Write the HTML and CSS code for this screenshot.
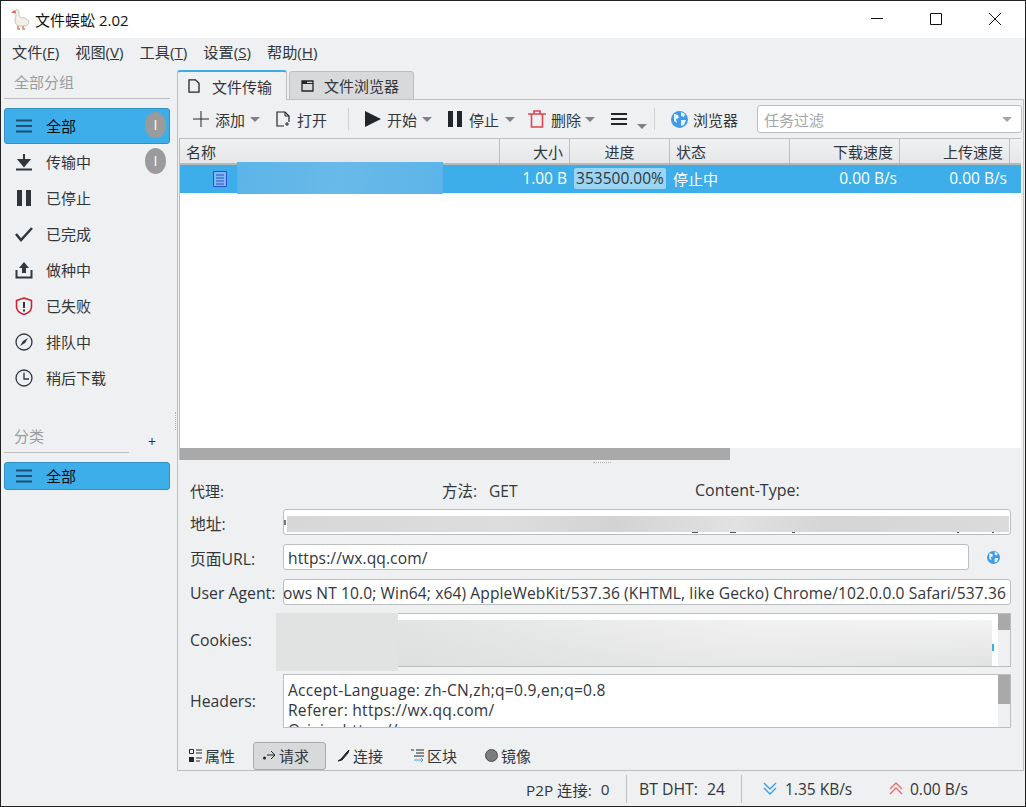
FILE: index.html
```html
<!DOCTYPE html>
<html lang="zh-CN">
<head>
    <meta charset="UTF-8">
    <title>文件蜈蚣 2.02</title>
    <link rel="stylesheet" href="styles.css">
</head>
<body>
<div class="window">

    <div class="titlebar">
        <svg class="app-icon" width="20" height="22" viewBox="0 0 20 22">
            <path d="M5 2c2-1 3 0 3 2 0 3 0 4 2 6 2-1 5 0 7 2 2 3 0 6-3 6H9c-3 0-5-2-5-6 0-2 1-3 1-5 0-2-1-2-1-3z" fill="#f1efe9" stroke="#c9c5ba"/>
            <path d="M4 2 0 4.500l5 1z" fill="#d9604c"/>
            <path d="M7 18v3h2M12 18v3h2" stroke="#d9806c" stroke-width="1.500" fill="none"/>
        </svg>
        <span class="app-title">文件蜈蚣 2.02</span>
        <div class="win-buttons">
            <svg width="14" height="14" viewBox="0 0 14 14"><path d="M1 6.500h12" stroke="#111" fill="none"/></svg>
            <svg width="14" height="14" viewBox="0 0 14 14"><path d="M1.500 1.500h11v11h-11z" stroke="#111" fill="none"/></svg>
            <svg width="14" height="14" viewBox="0 0 14 14"><path d="M1 1l12 12M13 1 1 13" stroke="#111" fill="none"/></svg>
        </div>
    </div>

    <div class="menubar">
        <span>文件(<u>F</u>)</span>
        <span>视图(<u>V</u>)</span>
        <span>工具(<u>T</u>)</span>
        <span>设置(<u>S</u>)</span>
        <span>帮助(<u>H</u>)</span>
    </div>

    <div class="content">
        <aside class="sidebar">
            <div class="side-head">全部分组</div>
            <div class="side-item selected">
                <svg class="side-icon" viewBox="0 0 18 18"><path d="M1 3.500h16M1 9h16M1 14.500h16" stroke="#1d4f73" stroke-width="2"/></svg>
                <span>全部</span><i class="badge">I</i>
            </div>
            <div class="side-item">
                <svg class="side-icon" viewBox="0 0 18 18"><path d="M9 1v7M4 7h10l-5 6z" stroke="#31363b" stroke-width="2" fill="#31363b"/><path d="M1 16.500h16" stroke="#31363b" stroke-width="2"/></svg>
                <span>传输中</span><i class="badge">I</i>
            </div>
            <div class="side-item">
                <svg class="side-icon" viewBox="0 0 18 18"><path d="M2 1h5v16H2zM11 1h5v16h-5z" fill="#31363b"/></svg>
                <span>已停止</span>
            </div>
            <div class="side-item">
                <svg class="side-icon" viewBox="0 0 18 18"><path d="M1 9l5 6L17 3" stroke="#31363b" stroke-width="2.500" fill="none"/></svg>
                <span>已完成</span>
            </div>
            <div class="side-item">
                <svg class="side-icon" viewBox="0 0 18 18"><path d="M1.500 9v7.500h15V9" stroke="#31363b" stroke-width="2" fill="none"/><path d="M9 1l5 6h-3v5H7V7H4z" fill="#31363b"/></svg>
                <span>做种中</span>
            </div>
            <div class="side-item">
                <svg class="side-icon" viewBox="0 0 18 18"><path d="M9 1l7.500 2.500V10c0 3-3 6-7.500 7.500C4.500 16 1.500 13 1.500 10V3.500z" stroke="#c8202c" stroke-width="1.500" fill="none"/><path d="M9 5v6M9 12.500v2" stroke="#31363b" stroke-width="2"/></svg>
                <span>已失败</span>
            </div>
            <div class="side-item">
                <svg class="side-icon" viewBox="0 0 18 18"><circle cx="9" cy="9" r="8" stroke="#31363b" fill="none" stroke-width="1.300"/><path d="M13 5 10 10 5 13 8 8z" fill="#31363b"/></svg>
                <span>排队中</span>
            </div>
            <div class="side-item">
                <svg class="side-icon" viewBox="0 0 18 18"><circle cx="9" cy="9" r="8" stroke="#31363b" fill="none" stroke-width="1.300"/><path d="M9 3.500V10h5" stroke="#31363b" fill="none" stroke-width="1.300"/></svg>
                <span>稍后下载</span>
            </div>
            <div class="side-cat">
                <div class="side-cat-head">分类</div>
                <span class="side-plus">+</span>
            </div>
            <div class="side-item selected short">
                <svg class="side-icon" viewBox="0 0 18 18"><path d="M1 3.500h16M1 9h16M1 14.500h16" stroke="#1d4f73" stroke-width="2"/></svg>
                <span>全部</span>
            </div>
            <i class="grip-v"></i>
        </aside>

        <main class="main">
            <div class="tabs">
                <div class="tab active">
                    <svg width="12" height="14" viewBox="0 0 12 14"><path d="M1 .8h6.500l3.500 3.500v8.900H1z" stroke="#232629" fill="none" stroke-width="1.300"/></svg>
                    <span>文件传输</span>
                </div>
                <div class="tab">
                    <svg width="13" height="12" viewBox="0 0 13 12"><path d="M1 1h11v10H1z" stroke="#232629" fill="none" stroke-width="1.300"/><path d="M1 1h5v2h6v1H1z" fill="#232629"/></svg>
                    <span>文件浏览器</span>
                </div>
            </div>

            <div class="panel">
                <div class="toolbar">
                    <div class="tool tool-add">
                        <svg width="16" height="16" viewBox="0 0 16 16"><path d="M8 0v16M0 8h16" stroke="#232629"/></svg>
                        <span>添加</span><b class="caret"></b>
                    </div>
                    <div class="tool tool-open">
                        <svg width="15" height="16" viewBox="0 0 15 16"><path d="M8 15H1V1h8l4 4v6" stroke="#232629" fill="none" stroke-width="1.200"/><path d="M9 1v4h4M11 11v4M9 13h4" stroke="#232629" fill="none"/></svg>
                        <span>打开</span>
                    </div>
                    <i class="tool-sep sep-a"></i>
                    <div class="tool tool-start">
                        <svg width="16" height="16" viewBox="0 0 16 16"><path d="M0 0l16 8-16 8z" fill="#232629"/></svg>
                        <span>开始</span><b class="caret"></b>
                    </div>
                    <div class="tool tool-stop">
                        <svg width="14" height="16" viewBox="0 0 14 16"><path d="M0 0h5v16H0zM9 0h5v16H9z" fill="#232629"/></svg>
                        <span>停止</span><b class="caret"></b>
                    </div>
                    <div class="tool tool-del">
                        <svg width="18" height="18" viewBox="0 0 18 18"><path d="M0 4h18M6 4V1h6v3M3.500 4v13h11V4" stroke="#da4453" stroke-width="1.600" fill="none"/></svg>
                        <span>删除</span><b class="caret"></b>
                    </div>
                    <div class="tool tool-menu">
                        <svg width="16" height="14" viewBox="0 0 16 14"><path d="M0 2h16M0 7h16M0 12h16" stroke="#232629" stroke-width="2"/></svg>
                        <b class="caret caret-low"></b>
                    </div>
                    <i class="tool-sep sep-b"></i>
                    <div class="tool tool-browser">
                        <svg width="17" height="17" viewBox="0 0 17 17"><circle cx="8.500" cy="8.500" r="8.500" fill="#3d9be9"/><path d="M3 3l4 1 1 3-3 1 1 4-3-2zM10 1l4 2-1 3-3-1zM10 9l5 0-2 5-3 1z" fill="#e9f3fb"/></svg>
                        <span>浏览器</span>
                    </div>
                    <div class="filter">
                        <span>任务过滤</span><b class="caret"></b>
                    </div>
                </div>

                <div class="table">
                    <div class="thead">
                        <div class="col col-name">名称</div>
                        <div class="col col-size right">大小</div>
                        <div class="col col-prog center">进度</div>
                        <div class="col col-state">状态</div>
                        <div class="col col-down right">下载速度</div>
                        <div class="col col-up right">上传速度</div>
                    </div>
                    <div class="trow">
                        <div class="col col-name">
                            <svg class="file-icon" width="14" height="16" viewBox="0 0 14 16"><path d="M.5.500h13v15H.500z" fill="#7fb7f0" stroke="#2b50c8"/><path d="M3 4h8M3 7h8M3 10h8M3 13h8" stroke="#2b50c8"/></svg>
                        </div>
                        <div class="col col-size right">1.00 B</div>
                        <div class="col col-prog center"><span class="prog">353500.00%</span></div>
                        <div class="col col-state">停止中</div>
                        <div class="col col-down right">0.00 B/s</div>
                        <div class="col col-up right">0.00 B/s</div>
                        <div class="blur-name"></div>
                    </div>
                    <div class="tbody"></div>
                    <div class="hscroll"><div class="hthumb"></div></div>
                </div>

                <div class="splitter"></div>

                <div class="details">
                    <i class="grip-h"></i>
                    <div class="meta">
                        <span class="meta-proxy">代理:</span>
                        <span class="meta-method">方法:<span class="method-value">GET</span></span>
                        <span class="meta-type">Content-Type:</span>
                    </div>
                    <div class="field first">
                        <label>地址:</label>
                        <div class="input addr"><div class="blur-addr"></div></div>
                    </div>
                    <div class="field">
                        <label>页面URL:</label>
                        <div class="input narrow">https://wx.qq.com/</div>
                        <svg class="url-globe" width="13" height="13" viewBox="0 0 17 17"><circle cx="8.500" cy="8.500" r="8.500" fill="#3d9be9"/><path d="M3 3l4 1 1 3-3 1 1 4-3-2zM10 1l4 2-1 3-3-1zM10 9l5 0-2 5-3 1z" fill="#e9f3fb"/></svg>
                    </div>
                    <div class="field">
                        <label>User Agent:</label>
                        <div class="input clip">ows NT 10.0; Win64; x64) AppleWebKit/537.36 (KHTML, like Gecko) Chrome/102.0.0.0 Safari/537.36</div>
                    </div>
                    <div class="field tall cookies">
                        <label>Cookies:</label>
                        <div class="area cookie-area">
                            <div class="vscroll"><div class="vthumb short-thumb"></div></div>
                            <div class="blur-cookie"></div>
                        </div>
                        <div class="blur-left"></div>
                    </div>
                    <div class="field tall headers">
                        <label>Headers:</label>
                        <div class="area">
                            <div class="area-text">Accept-Language: zh-CN,zh;q=0.9,en;q=0.8<br>Referer: https://wx.qq.com/<br>Origin: https://wx.qq.com</div>
                            <div class="vscroll"><div class="vthumb"></div></div>
                        </div>
                    </div>
                </div>

                <div class="bottom-tabs">
                    <div class="btab btab-attr">
                        <svg width="13" height="13" viewBox="0 0 13 13"><path d="M.5.500h4v4h-4z" fill="none" stroke="#232629"/><path d="M0 8h5v5H0z" fill="#232629"/><path d="M7 1h6M7 4h6M7 9h6M7 12h4" stroke="#232629"/></svg>
                        <span>属性</span>
                    </div>
                    <div class="btab btab-req current">
                        <svg width="13" height="11" viewBox="0 0 13 11"><path d="M4 5h8M8 1l4 4-4 4" stroke="#232629" fill="none"/><circle cx="1.500" cy="8" r="1.500" fill="#232629"/></svg>
                        <span>请求</span>
                    </div>
                    <div class="btab btab-conn">
                        <svg width="13" height="13" viewBox="0 0 13 13"><path d="M1 12l3-2 6-7 2-2-1 3-6 7z" fill="#232629" stroke="#232629"/></svg>
                        <span>连接</span>
                    </div>
                    <div class="btab btab-block">
                        <svg width="13" height="13" viewBox="0 0 13 13"><path d="M0 1h3M5 1h8M5 4h8M3 7h10" stroke="#232629"/><path d="M3 11h9M10 9l2 2-2 2" stroke="#3daee9" fill="none"/></svg>
                        <span>区块</span>
                    </div>
                    <div class="btab btab-mirror">
                        <svg width="13" height="13" viewBox="0 0 13 13"><circle cx="6.500" cy="6.500" r="6" fill="#7a7c7e" stroke="#4d4f51"/></svg>
                        <span>镜像</span>
                    </div>
                </div>
            </div>
        </main>
    </div>

    <div class="statusbar">
        <div class="stat stat-p2p"><span>P2P 连接:</span><span>0</span></div>
        <div class="stat stat-dht"><span>BT DHT:</span><span>24</span></div>
        <div class="stat stat-down">
            <svg width="14" height="14" viewBox="0 0 14 14"><path d="M1 1l6 6 6-6M1 6l6 6 6-6" stroke="#3d9be9" stroke-width="1.400" fill="none"/></svg>
            <span>1.35 KB/s</span>
        </div>
        <div class="stat stat-up">
            <svg width="14" height="14" viewBox="0 0 14 14"><path d="M1 7l6-6 6 6M1 12l6-6 6 6" stroke="#e56b70" stroke-width="1.400" fill="none"/></svg>
            <span>0.00 B/s</span>
        </div>
    </div>

</div>
</body>
</html>
```

FILE: styles.css
```css
html, body {
    margin: 0;
    height: 100%;
    background-color: #eff0f1;
}

body {
    font-family: "Open Sans", "Noto Sans CJK SC", sans-serif;
    font-size: 15px;
    color: #31363b;
    overflow: hidden;
}

.window {
    width: 1026px;
    height: 807px;
    box-sizing: border-box;
    border: 1px solid #222;
    display: flex;
    flex-direction: column;
    background-color: #eff0f1;
}

/* title bar */
.titlebar {
    height: 37px;
    flex: none;
    box-sizing: border-box;
    background-color: #fff;
    display: flex;
    align-items: center;
    padding: 0 0 1px 10px;
    color: #111;
}

.app-icon {
    margin-right: 4px;
}

.win-buttons {
    margin-left: auto;
    display: flex;
    gap: 45px;
    padding-right: 23px;
}

/* menu */
.menubar {
    height: 28px;
    flex: none;
    box-sizing: border-box;
    display: flex;
    align-items: center;
    padding: 0 0 2px 11px;
    gap: 16px;
    font-size: 15.200px;
}

.content {
    flex: 1;
    display: flex;
    min-height: 0;
}

/* left side */
.sidebar {
    width: 176px;
    flex: none;
    padding: 0 7px 0 3px;
    box-sizing: border-box;
    position: relative;
}

.grip-v {
    position: absolute;
    right: 1px;
    top: 346px;
    height: 18px;
    border-right: 1px dotted #b0b2b4;
}

.side-head {
    height: 32px;
    line-height: 33px;
    padding-left: 10px;
    color: #9a9c9e;
    border-bottom: 1px solid #bcbebf;
    margin-bottom: 9px;
}

.side-item {
    height: 36px;
    box-sizing: border-box;
    display: flex;
    align-items: center;
    padding-left: 11px;
    position: relative;
}

.side-item span {
    margin-bottom: 2px;
}

.side-item.selected {
    background-color: #3daee9;
    border: 1px solid #3590c2;
    border-radius: 3px;
    padding-left: 10px;
    color: #0c0c0c;
}

.side-item.short {
    height: 28px;
}

.side-icon {
    width: 18px;
    height: 18px;
    margin-right: 13px;
    flex: none;
}

.badge {
    position: absolute;
    right: 3px;
    top: 3px;
    width: 21px;
    height: 26px;
    border-radius: 50%;
    background-color: #9b9b9b;
    color: #fff;
    font-style: normal;
    font-size: 14px;
    line-height: 25px;
    text-align: center;
}

.side-item:not(.selected) .badge {
    top: 4px;
    right: 4px;
}

.side-cat {
    display: flex;
    align-items: flex-end;
    margin-top: 23px;
    margin-bottom: 9px;
    height: 34px;
}

.side-cat-head {
    width: 115px;
    height: 32px;
    line-height: 32px;
    padding-left: 10px;
    color: #9a9c9e;
    border-bottom: 1px solid #bcbebf;
}

.side-plus {
    margin-left: 19px;
    margin-bottom: 2px;
    color: #3a2a4a;
    font-size: 14px;
}

/* main area */
.main {
    flex: 1;
    min-width: 0;
    display: flex;
    flex-direction: column;
    padding-right: 1px;
}

.tabs {
    height: 34px;
    flex: none;
    display: flex;
    align-items: flex-end;
    gap: 2px;
    margin-bottom: -1px;
    position: relative;
    z-index: 1;
}

.tab {
    width: 125px;
    height: 29px;
    box-sizing: border-box;
    display: flex;
    align-items: center;
    gap: 10px;
    padding: 0 0 0 11px;
    background-color: #d8d9da;
    border: 1px solid #bcbebf;
    border-radius: 3px 3px 0 0;
}

.tab.active {
    width: 110px;
    height: 30px;
    background-color: #eff0f1;
    border-top: 2px solid #3daee9;
    border-bottom: 0;
    padding-left: 10px;
    gap: 12px;
}

.panel {
    flex: 1;
    min-height: 0;
    display: flex;
    flex-direction: column;
    border: 1px solid #bcbebf;
}

.toolbar {
    height: 38px;
    flex: none;
    display: flex;
    align-items: center;
}

.tool {
    display: flex;
    align-items: center;
    gap: 6px;
    flex: none;
}

.tool-add { margin-left: 15px; }
.tool-open { margin-left: 16px; }
.tool-stop { margin-left: 16px; gap: 7px; }
.tool-del { margin-left: 13px; gap: 5px; }
.tool-menu { margin-left: 16px; gap: 10px; }
.tool-browser { gap: 5px; }

.caret {
    width: 0;
    height: 0;
    border-left: 5px solid transparent;
    border-right: 5px solid transparent;
    border-top: 5px solid #7f8385;
    margin-left: -1px;
}

.caret-low {
    margin: 14px 0 0 0;
}

.tool-sep {
    width: 1px;
    height: 22px;
    background-color: #d0d2d3;
    flex: none;
}

.sep-a { margin: 0 16px 0 21px; }
.sep-b { margin: 0 16px 0 7px; }

.filter {
    margin-left: 19px;
    width: 265px;
    height: 28px;
    box-sizing: border-box;
    background-color: #fff;
    border: 1px solid #bcbebf;
    border-radius: 3px;
    display: flex;
    align-items: center;
    justify-content: space-between;
    padding: 0 9px 0 6px;
    color: #a3a5a7;
}

.filter .caret {
    margin: 0;
    border-top-color: #a3a5a7;
}

/* task table */
.table {
    margin: 0 2px 0 1px;
    height: 322px;
    flex: none;
    display: flex;
    flex-direction: column;
    background-color: #fff;
    border: 1px solid #bcbebf;
    border-bottom: 0;
    border-right: 0;
    box-sizing: border-box;
}

.thead {
    height: 26px;
    flex: none;
    display: flex;
    background-image: linear-gradient(#f0f1f2, #e6e7e8);
    border-bottom: 2px solid #b6b8ba;
    box-sizing: border-box;
}

.thead .col {
    border-right: 1px solid #bcbebf;
    box-sizing: border-box;
    line-height: 27px;
    padding: 0 6px;
}

.col {
    flex: none;
    box-sizing: border-box;
}

.col-name { width: 320px; }
.col-size { width: 70px; }
.col-prog { width: 100px; }
.col-state { width: 120px; }
.col-down { width: 110px; }
.col-up { width: 110px; }

.right { text-align: right; }
.center { text-align: center; }

.trow {
    height: 28px;
    flex: none;
    display: flex;
    align-items: center;
    background-color: #3daee9;
    color: #fff;
    font-size: 15.500px;
    position: relative;
}

.trow .col {
    padding: 0 3px;
    margin-bottom: 2px;
}

.trow .col-state {
    font-size: 15px;
}

.trow .col-prog {
    margin-bottom: 1px;
}

.trow .col-name {
    padding-left: 33px;
    margin-bottom: 0;
    display: flex;
}

.prog {
    display: block;
    background-color: #9ad5f4;
    color: #31363b;
    border-radius: 2px;
    line-height: 21px;
    margin: 0 1px;
    white-space: nowrap;
}

.blur-name {
    position: absolute;
    left: 57px;
    top: -3px;
    width: 206px;
    height: 32px;
    background-image: linear-gradient(100deg, #5cb4e8, #68bae9 50%, #5cb4e8);
}

.tbody {
    flex: 1;
}

.hscroll {
    height: 12px;
    flex: none;
    background-color: #eff0f1;
}

.hthumb {
    width: 550px;
    height: 100%;
    background-color: #a9a9a9;
}

.splitter {
    height: 1px;
    flex: none;
}

/* request details */
.details {
    flex: 1;
    min-height: 0;
    display: flex;
    flex-direction: column;
    padding: 16px 12px 0 12px;
    position: relative;
}

.grip-h {
    position: absolute;
    left: 415px;
    top: 1px;
    width: 18px;
    border-top: 1px dotted #b0b2b4;
}

.meta {
    height: 26px;
    flex: none;
    display: flex;
    align-items: center;
}

.meta-proxy { width: 252px; }
.meta-method { width: 253px; font-size: 15.500px; }
.method-value { margin-left: 12px; }
.meta-type { font-size: 16px; }

.field {
    display: flex;
    align-items: center;
    height: 26px;
    margin-top: 9px;
    flex: none;
    position: relative;
}

.field.first {
    margin-top: 6px;
}

.field label {
    width: 93px;
    flex: none;
    padding-top: 2px;
    font-size: 15.800px;
}

.input {
    flex: 1;
    min-width: 0;
    height: 26px;
    box-sizing: border-box;
    background-color: #fff;
    border: 1px solid #bcbebf;
    border-radius: 3px;
    padding: 0 4px;
    font-size: 15.600px;
    line-height: 26px;
    white-space: nowrap;
    overflow: hidden;
    position: relative;
    letter-spacing: .1px;
}

/* bits of the address that stick out from under the blur */
.input.addr {
    background-image:
        linear-gradient(#555, #555), linear-gradient(#555, #555), linear-gradient(#555, #555),
        linear-gradient(#555, #555), linear-gradient(#555, #555), linear-gradient(#777, #777);
    background-repeat: no-repeat;
    background-size: 6px 1px, 6px 1px, 3px 1px, 2px 1px, 2px 1px, 2px 5px;
    background-position: 408px 22px, 446px 22px, 508px 22px, 673px 22px, 708px 22px, 0 10px;
}

.input.narrow {
    flex: none;
    width: 686px;
}

.input.clip {
    padding: 0;
    text-indent: -1px;
}

.url-globe {
    margin-left: 18px;
}

.blur-addr {
    position: absolute;
    left: 3px;
    right: 1px;
    top: 6px;
    height: 16px;
    background-image: linear-gradient(90deg, #d6d7d6, #dcdddc 30%, #d2d3d2 45%, #e0e1e0 62%, #d4d5d4 75%, #dadbda);
}

.field.tall {
    height: 54px;
    align-items: stretch;
}

.field.tall label {
    align-self: center;
    padding-top: 0;
}

.cookies {
    margin-top: 8px;
}

.headers {
    margin-top: 7px;
}

.area {
    flex: 1;
    min-width: 0;
    box-sizing: border-box;
    background-color: #fff;
    border: 1px solid #bcbebf;
    overflow: hidden;
    position: relative;
    display: flex;
}

.cookie-area {
    background-image: linear-gradient(#3daee9, #3daee9);
    background-repeat: no-repeat;
    background-size: 2px 7px;
    background-position: 708px 30px;
}

.area-text {
    flex: 1;
    padding: 5px 4px;
    font-size: 15.600px;
    line-height: 20px;
    letter-spacing: .25px;
}

.vscroll {
    width: 12px;
    flex: none;
    margin-left: auto;
    background-color: #eff0f1;
}

.vthumb {
    height: 29px;
    background-color: #a9a9a9;
}

.short-thumb {
    height: 16px;
}

.blur-cookie {
    position: absolute;
    left: 114px;
    right: 18px;
    top: 6px;
    bottom: 0;
    background-image: linear-gradient(90deg, rgba(222, 223, 223, .8), rgba(240, 240, 240, .5) 60%, rgba(245, 245, 245, .15)), linear-gradient(#f3f3f3, #dedfdf);
}

.blur-left {
    position: absolute;
    left: 86px;
    top: 0;
    width: 122px;
    height: 58px;
    background-color: #e1e2e2;
}

/* bottom tabs */
.bottom-tabs {
    height: 29px;
    flex: none;
    display: flex;
    align-items: center;
    padding-left: 11px;
}

.btab {
    display: flex;
    align-items: center;
    gap: 3px;
    height: 28px;
    box-sizing: border-box;
    flex: none;
}

.btab.current {
    width: 73px;
    margin-left: 18px;
    padding-left: 9px;
    background-color: #d8d9da;
    border: 1px solid #a9abad;
    border-radius: 3px;
}

.btab-conn { margin-left: 11px; }
.btab-block { margin-left: 28px; }
.btab-mirror { margin-left: 28px; }

/* status bar */
.statusbar {
    height: 35px;
    flex: none;
    display: flex;
    align-items: center;
    padding-top: 1px;
    box-sizing: border-box;
}

.stat {
    display: flex;
    align-items: center;
    height: 28px;
    flex: none;
    box-sizing: border-box;
    font-size: 15.500px;
}

.stat-p2p {
    margin-left: 525px;
    width: 101px;
    gap: 9px;
    border-right: 1px solid #bcbebf;
    font-size: 15.300px;
}

.stat-dht {
    width: 115px;
    padding-left: 12px;
    gap: 9px;
    border-right: 1px solid #bcbebf;
    font-size: 15.800px;
}

.stat-down {
    margin-left: 21px;
    width: 126px;
    gap: 8px;
}

.stat-up {
    gap: 7px;
}
```
